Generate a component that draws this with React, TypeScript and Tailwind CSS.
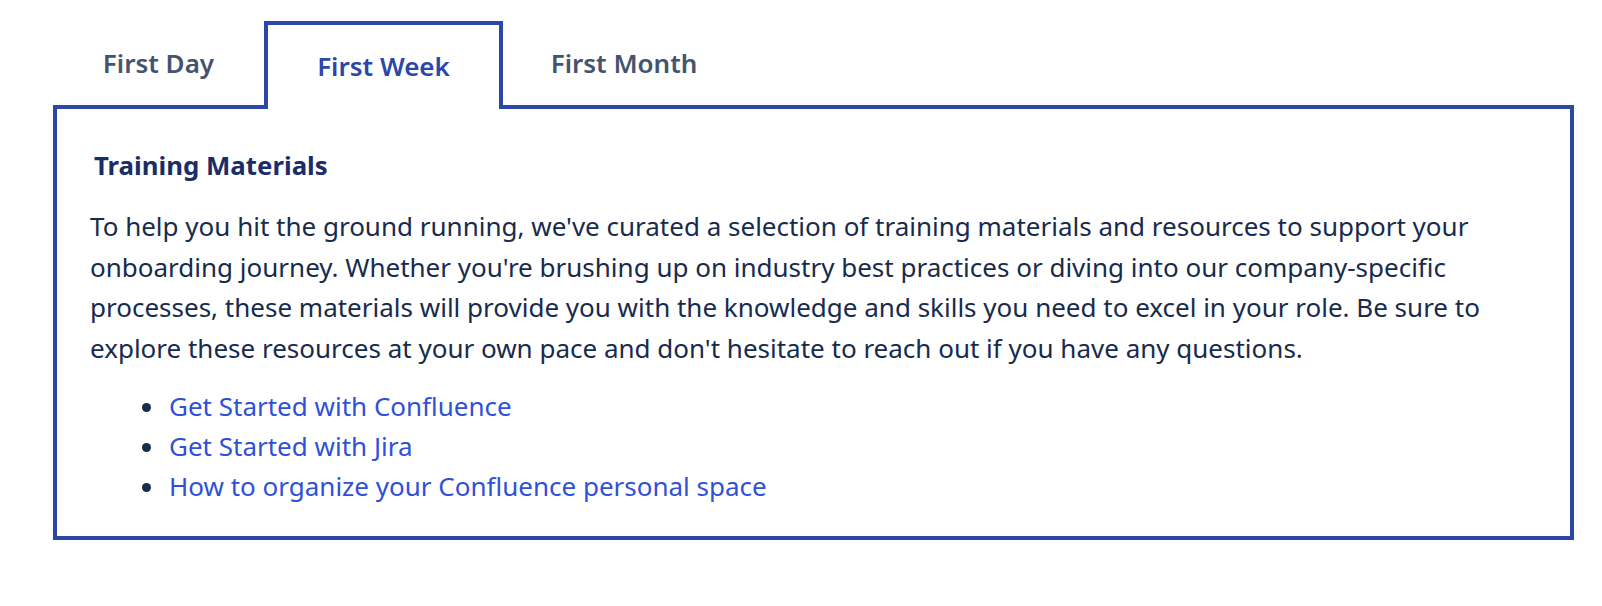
import React, { useState } from 'react';

type TabKey = 'day' | 'week' | 'month';

const tabs: { key: TabKey; label: string; width: string }[] = [
  { key: 'day', label: 'First Day', width: 'w-[211px]' },
  { key: 'week', label: 'First Week', width: 'w-[239px]' },
  { key: 'month', label: 'First Month', width: 'w-[242px]' },
];

const links = [
  'Get Started with Confluence',
  'Get Started with Jira',
  'How to organize your Confluence personal space',
];

export default function App() {
  const [active, setActive] = useState<TabKey>('week');

  return (
    <div className="min-h-screen bg-white pl-[53px] pr-[28px] pt-[21px] font-['Noto_Sans',sans-serif]">
      {/* Tab row */}
      <div className="flex items-end">
        {tabs.map((tab) =>
          tab.key === active ? (
            <button
              key={tab.key}
              onClick={() => setActive(tab.key)}
              className={`${tab.width} relative z-10 -mb-[4px] h-[88px] border-4 border-b-0 border-[#2b47a8] bg-white pb-[2px] text-[26px] font-semibold text-[#2b47a8]`}
            >
              {tab.label}
            </button>
          ) : (
            <button
              key={tab.key}
              onClick={() => setActive(tab.key)}
              className={`${tab.width} h-[84px] text-[26px] font-semibold text-[#44546f]`}
            >
              {tab.label}
            </button>
          )
        )}
      </div>

      {/* Panel */}
      <div className="border-4 border-[#2b47a8] bg-white pl-[33px] pr-[30px] pt-[38px] pb-[30px]">
        <h3 className="pl-[4px] text-[25.8px] font-bold leading-[36px] text-[#1b2d66]">Training Materials</h3>
        <p className="mt-[23px] max-w-[1410px] text-[26px] leading-[40.5px] text-[#172b4d]">
          To help you hit the ground running, we've curated a selection of training materials and resources to support your
          onboarding journey. Whether you're brushing up on industry best practices or diving into our company-specific
          processes, these materials will provide you with the knowledge and skills you need to excel in your role. Be sure to
          explore these resources at your own pace and don't hesitate to reach out if you have any questions.
        </p>
        <ul className="mt-[18px] list-disc pl-[77px] text-[26px] leading-[40px] text-[#172b4d] marker:text-[#172b4d]">
          {links.map((l) => (
            <li key={l} className="pl-[2px]">
              <a href="#" className="text-[#3050d8]">
                {l}
              </a>
            </li>
          ))}
        </ul>
      </div>
    </div>
  );
}
